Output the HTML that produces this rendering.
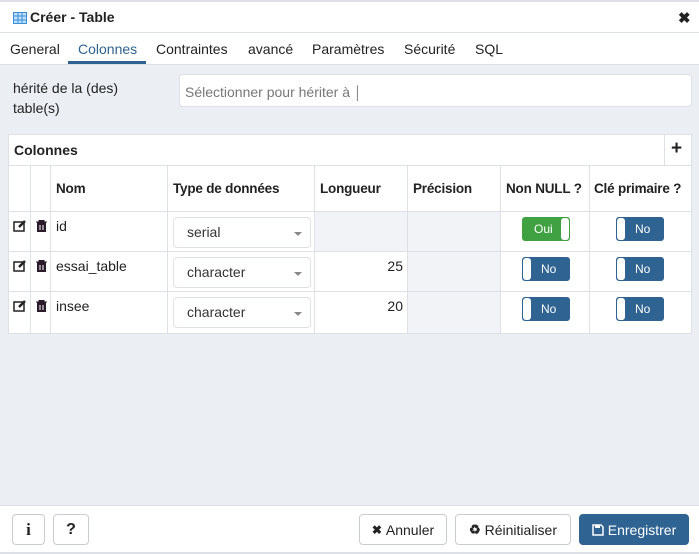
<!DOCTYPE html>
<html><head><meta charset="utf-8"><style>
*{box-sizing:border-box;margin:0;padding:0}
body{width:699px;height:554px;overflow:hidden;font-family:"Liberation Sans",sans-serif;font-size:14px;color:#222;background:#fff;position:relative}
.a{position:absolute}
.hdr{left:0;top:0;width:699px;height:33px;background:#fff;border-top:2px solid #dde0e6;border-bottom:1px solid #dde0e6}
.tabs{left:0;top:33px;width:699px;height:32px;background:#fff;border-bottom:1px solid #dde0e6}
.tab{position:absolute;top:8px;font-size:14px;color:#222}
.content{left:0;top:65px;width:699px;height:440px;background:#ebeef3}
.footer{left:0;top:505px;width:699px;height:49px;background:#fff;border-top:1px solid #dde0e6;border-bottom:2px solid #dde0e6}
.btn{position:absolute;top:8px;height:31px;border:1px solid #c9ccd2;border-radius:4px;background:#fff;font-size:14px;display:flex;align-items:center;justify-content:center;gap:4px}
.cell{position:absolute;border-right:1px solid #dde0e6;border-bottom:1px solid #dde0e6}
.th{font-weight:bold;font-size:13.5px;padding:15px 0 0 5px;letter-spacing:-0.2px}
.sel{position:absolute;width:138px;height:31px;border:1px solid #dde0e6;border-radius:4px;background:#fff;padding:6px 0 0 13px;font-size:14px;color:#333}
.sel:after{content:"";position:absolute;right:8px;top:14px;border-left:4px solid transparent;border-right:4px solid transparent;border-top:4px solid #888}
.tg{position:absolute;width:48px;height:24px;border-radius:3px;background:#2f6391;color:#fff;font-size:12px;border:1px solid #2f6391}
.tg .k{position:absolute;left:0;top:0;width:8px;height:22px;background:#fff;border-radius:3px}
.tg span{position:absolute;left:18px;top:4px}
</style></head><body>
<div class="a hdr">
<svg class="a" style="left:13px;top:10px" width="14" height="12"><rect x="0.5" y="0.5" width="13" height="11" fill="#bfe0f8" stroke="#3a8ed6"/><path d="M0 4H14M0 8H14M5 0V12M9 0V12" stroke="#3a8ed6"/></svg>
<div class="a" style="left:30px;top:7px;font-weight:bold;font-size:14px">Créer - Table</div>
<div class="a" style="left:678px;top:7px;font-weight:bold;font-size:15px">✖</div>
</div>
<div class="a tabs">
<div class="tab" style="left:10px">General</div>
<div class="tab" style="left:78px;color:#2f6391">Colonnes</div>
<div class="a" style="left:68px;top:28px;width:78px;height:3px;background:#2f6391"></div>
<div class="tab" style="left:156px">Contraintes</div>
<div class="tab" style="left:248px">avancé</div>
<div class="tab" style="left:312px">Paramètres</div>
<div class="tab" style="left:404px">Sécurité</div>
<div class="tab" style="left:475px">SQL</div>
</div>
<div class="a content">
<div class="a" style="left:13px;top:13px;line-height:20px;font-size:14px">hérité de la (des)<br>table(s)</div>
<div class="a" style="left:179px;top:9px;width:513px;height:33px;background:#fff;border:1px solid #dde0e6;border-radius:4px;padding:7px 5px;color:#777;font-size:14px">Sélectionner pour hériter à ￨</div>
<div class="a" style="left:8px;top:69px;width:684px;height:200px;background:#fff;border:1px solid #dde0e6"></div>
<div class="a" style="left:14px;top:77px;font-weight:bold;font-size:14px">Colonnes</div>
<div class="a" style="left:664px;top:69px;width:1px;height:32px;background:#dde0e6"></div>
<div class="a" style="left:671px;top:73px;font-weight:bold;font-size:19px">+</div>
<div class="a" style="left:9px;top:100px;width:682px;height:1px;background:#dde0e6"></div>
</div>
<div id="t" class="a" style="left:9px;top:166px;width:682px;height:167px">
<div class="cell" style="left:0;top:0;width:22px;height:46px"></div>
<div class="cell" style="left:22px;top:0;width:20px;height:46px"></div>
<div class="cell th" style="left:42px;top:0;width:117px;height:46px">Nom</div>
<div class="cell th" style="left:159px;top:0;width:147px;height:46px">Type de données</div>
<div class="cell th" style="left:306px;top:0;width:93px;height:46px">Longueur</div>
<div class="cell th" style="left:399px;top:0;width:93px;height:46px">Précision</div>
<div class="cell th" style="left:492px;top:0;width:89px;height:46px">Non NULL ?</div>
<div class="cell th" style="left:581px;top:0;width:101px;height:46px;border-right:none;padding-left:4px">Clé primaire ?</div>

<div class="cell" style="left:0;top:46px;width:22px;height:40px"></div>
<div class="cell" style="left:22px;top:46px;width:20px;height:40px"></div>
<div class="cell" style="left:42px;top:46px;width:117px;height:40px;padding:6px 0 0 5px">id</div>
<div class="cell" style="left:159px;top:46px;width:147px;height:40px"></div>
<div class="cell" style="left:306px;top:46px;width:93px;height:40px;background:#f2f3f7"></div>
<div class="cell" style="left:399px;top:46px;width:93px;height:40px;background:#f2f3f7"></div>
<div class="cell" style="left:492px;top:46px;width:89px;height:40px"></div>
<div class="cell" style="left:581px;top:46px;width:101px;height:40px;border-right:none"></div>

<div class="cell" style="left:0;top:86px;width:22px;height:40px"></div>
<div class="cell" style="left:22px;top:86px;width:20px;height:40px"></div>
<div class="cell" style="left:42px;top:86px;width:117px;height:40px;padding:6px 0 0 5px">essai_table</div>
<div class="cell" style="left:159px;top:86px;width:147px;height:40px"></div>
<div class="cell" style="left:306px;top:86px;width:93px;height:40px;text-align:right;padding:6px 4px 0 0">25</div>
<div class="cell" style="left:399px;top:86px;width:93px;height:40px;background:#f2f3f7"></div>
<div class="cell" style="left:492px;top:86px;width:89px;height:40px"></div>
<div class="cell" style="left:581px;top:86px;width:101px;height:40px;border-right:none"></div>

<div class="cell" style="left:0;top:126px;width:22px;height:41px;border-bottom:none"></div>
<div class="cell" style="left:22px;top:126px;width:20px;height:41px;border-bottom:none"></div>
<div class="cell" style="left:42px;top:126px;width:117px;height:41px;border-bottom:none;padding:6px 0 0 5px">insee</div>
<div class="cell" style="left:159px;top:126px;width:147px;height:41px;border-bottom:none"></div>
<div class="cell" style="left:306px;top:126px;width:93px;height:41px;border-bottom:none;text-align:right;padding:6px 4px 0 0">20</div>
<div class="cell" style="left:399px;top:126px;width:93px;height:41px;border-bottom:none;background:#f2f3f7"></div>
<div class="cell" style="left:492px;top:126px;width:89px;height:41px;border-bottom:none"></div>

<div class="sel" style="left:164px;top:51px">serial</div>
<div class="sel" style="left:164px;top:91px">character</div>
<div class="sel" style="left:164px;top:131px">character</div>

<div class="tg" style="left:513px;top:51px;background:#3fa142;border-color:#3fa142"><span style="left:11px">Oui</span><div class="k" style="left:38px"></div></div>
<div class="tg" style="left:607px;top:51px"><div class="k"></div><span>No</span></div>
<div class="tg" style="left:513px;top:91px"><div class="k"></div><span>No</span></div>
<div class="tg" style="left:607px;top:91px"><div class="k"></div><span>No</span></div>
<div class="tg" style="left:513px;top:131px"><div class="k"></div><span>No</span></div>
<div class="tg" style="left:607px;top:131px"><div class="k"></div><span>No</span></div>
</div>
<svg class="a" style="left:13px;top:220px" width="14" height="12"><rect x="1" y="2" width="10" height="9" fill="none" stroke="#222" stroke-width="1.5"/><path d="M6 7L12 1" stroke="#222" stroke-width="2.5"/></svg>
<svg class="a" style="left:13px;top:260px" width="14" height="12"><rect x="1" y="2" width="10" height="9" fill="none" stroke="#222" stroke-width="1.5"/><path d="M6 7L12 1" stroke="#222" stroke-width="2.5"/></svg>
<svg class="a" style="left:13px;top:300px" width="14" height="12"><rect x="1" y="2" width="10" height="9" fill="none" stroke="#222" stroke-width="1.5"/><path d="M6 7L12 1" stroke="#222" stroke-width="2.5"/></svg>
<svg class="a" style="left:36px;top:220px" width="11" height="12"><path d="M0 2H11M3 2V0.5H8V2M1.5 3H9.5V12H1.5Z" fill="#2a1a2a" stroke="#2a1a2a"/><path d="M4 5V10M7 5V10" stroke="#fff"/></svg>
<svg class="a" style="left:36px;top:260px" width="11" height="12"><path d="M0 2H11M3 2V0.5H8V2M1.5 3H9.5V12H1.5Z" fill="#2a1a2a" stroke="#2a1a2a"/><path d="M4 5V10M7 5V10" stroke="#fff"/></svg>
<svg class="a" style="left:36px;top:300px" width="11" height="12"><path d="M0 2H11M3 2V0.5H8V2M1.5 3H9.5V12H1.5Z" fill="#2a1a2a" stroke="#2a1a2a"/><path d="M4 5V10M7 5V10" stroke="#fff"/></svg>

<div class="a footer">
<div class="btn" style="left:12px;width:33px;font-weight:bold;font-size:17px;font-family:'Liberation Serif',serif">i</div>
<div class="btn" style="left:53px;width:36px;font-weight:bold;font-size:16px">?</div>
<div class="btn" style="left:359px;width:88px"><b style="font-size:12px">✖</b>Annuler</div>
<div class="btn" style="left:455px;width:116px"><b style="font-size:13px">♻</b>Réinitialiser</div>
<div class="btn" style="left:579px;width:110px;background:#2f6391;border-color:#2f6391;color:#fff"><svg width="12" height="12"><path d="M1 1H9L11 3V11H1Z" fill="none" stroke="#fff" stroke-width="1.5"/><rect x="3" y="1" width="5" height="3" fill="#fff"/></svg>Enregistrer</div>
</div>
</body></html>
